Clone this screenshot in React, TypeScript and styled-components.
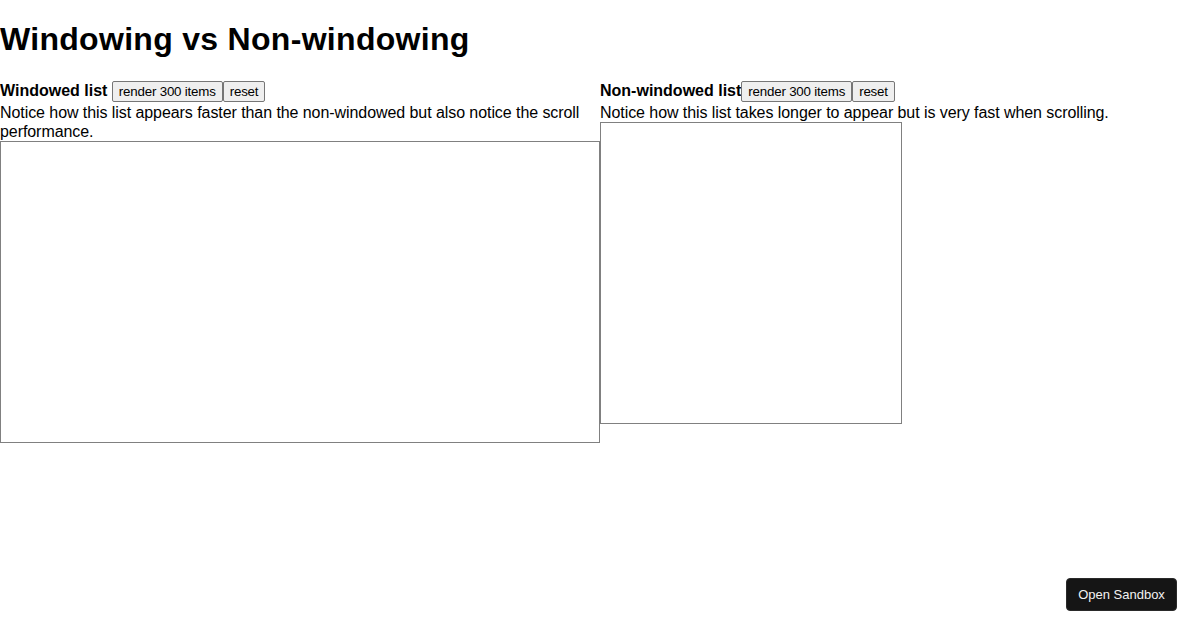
import React from "react";
import styled, { createGlobalStyle } from "styled-components";

const Global = createGlobalStyle`
  html, body { margin: 0; padding: 0; background: #fff; }
  body { font-family: "Liberation Sans", Arial, sans-serif; font-size: 16px; color: #000; }
`;

const Title = styled.h1`
  font-size: 32px;
  font-weight: bold;
  margin: 21.44px 0;
  line-height: 37px;
  letter-spacing: 0.3px;
`;

const Columns = styled.div`
  display: flex;
`;

const Column = styled.div`
  flex: 1 1 0;
  min-width: 0;
`;

const Header = styled.div`
  line-height: 19px;
  padding: 1px 0 1px;
`;

const Label = styled.strong`
  font-weight: bold;
`;

const Button = styled.button`
  font-family: "Liberation Sans", Arial, sans-serif;
  font-size: 13.33px;
  line-height: normal;
  letter-spacing: -0.2px;
  padding: 2px 6px;
  border: 1px solid #767676;
  border-radius: 2px;
  background: #efefef;
  color: #000;
  margin: 0;
`;

const Note = styled.div`
  line-height: 19px;
  letter-spacing: -0.07px;
`;

const ListBox = styled.div<{ $width?: number }>`
  height: 300px;
  width: ${(p) => (p.$width ? `${p.$width}px` : "auto")};
  border: 1px solid #808080;
  overflow: auto;
`;

const Sandbox = styled.a`
  position: fixed;
  right: 23px;
  bottom: 19px;
  width: 111px;
  height: 33px;
  box-sizing: border-box;
  display: flex;
  align-items: center;
  justify-content: center;
  background: #151515;
  color: #f2f2f2;
  border-radius: 4px;
  font-family: "Liberation Sans", Arial, sans-serif;
  font-size: 13px;
  text-decoration: none;
  border: 1px solid #2a2a2a;
`;

export default function App() {
  return (
    <>
      <Global />
      <Title>Windowing vs Non-windowing</Title>
      <Columns>
        <Column>
          <Header>
            <Label>Windowed list</Label> <Button>render 300 items</Button>
            <Button>reset</Button>
          </Header>
          <Note>
            Notice how this list appears faster than the non-windowed but also notice the scroll
            performance.
          </Note>
          <ListBox />
        </Column>
        <Column>
          <Header>
            <Label>Non-windowed list</Label>
            <Button>render 300 items</Button>
            <Button>reset</Button>
          </Header>
          <Note>Notice how this list takes longer to appear but is very fast when scrolling.</Note>
          <ListBox $width={300} />
        </Column>
      </Columns>
      <Sandbox href="#">Open Sandbox</Sandbox>
    </>
  );
}
